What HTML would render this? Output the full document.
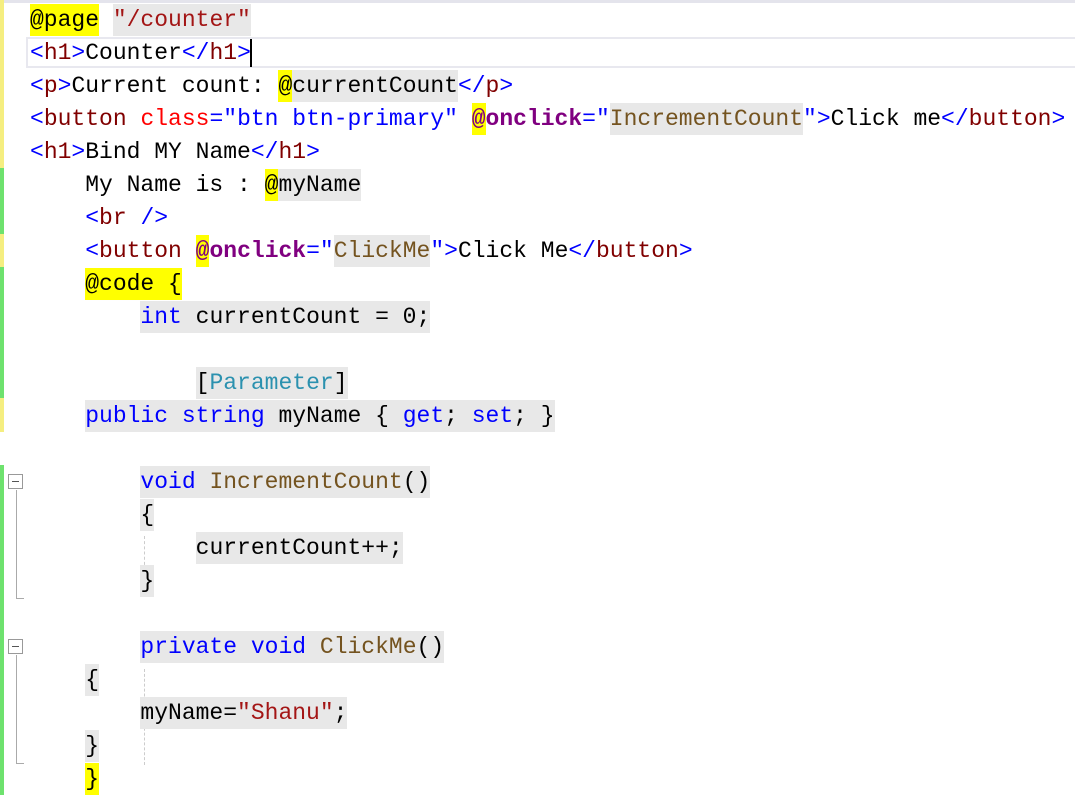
<!DOCTYPE html>
<html><head><style>
body{margin:0;width:1075px;height:795px;background:#fff;overflow:hidden;position:relative;font-family:"Liberation Mono",monospace;}
#w{position:absolute;left:0;top:1px;width:1075px;height:795px}
.l{position:absolute;left:30px;height:33px;line-height:33px;font-size:23px;white-space:pre;color:#000;}
.l span{display:inline-block;height:32px;}
.y{background:#ffff00}.g{background:#e8e8e8}
.t{color:#0000ff}.n{color:#800000}.a{color:#ff0000}.v{color:#0000ff}
.p{color:#800080;font-weight:bold}.m{color:#74531f}.s{color:#a31515}.c{color:#2b91af}.k{color:#0000ff}
.bar{position:absolute;left:0;width:4px}
.fold{position:absolute;left:8px;width:13px;height:13px;border:1px solid #999;background:#fff}
.fold:after{content:"";position:absolute;left:3px;top:6px;width:7px;height:1px;background:#555}
.fl{position:absolute;left:16px;width:7px;border-left:1px solid #aaa;border-bottom:1px solid #aaa}
.dg{position:absolute;left:144px;width:0;border-left:1px dashed #ccc}
</style></head><body>
<div style="position:absolute;left:0;top:0;width:1075px;height:3px;background:#e4e4ec"></div>
<div class="bar" style="top:0;height:168px;background:#f5ee80"></div>
<div class="bar" style="top:168px;height:66px;background:#6ee26e"></div>
<div class="bar" style="top:234px;height:33px;background:#f5ee80"></div>
<div class="bar" style="top:267px;height:131px;background:#6ee26e"></div>
<div class="bar" style="top:398px;height:34px;background:#f5ee80"></div>
<div class="bar" style="top:465px;height:330px;background:#6ee26e"></div>
<div id="w">
<div style="position:absolute;left:26px;top:36px;width:1060px;height:31px;border:2px solid #e8e8ef;box-sizing:border-box"></div>
<div style="position:absolute;left:250px;top:38px;width:2px;height:28px;background:#000"></div>
<div class="fold" style="top:473px"></div><div class="fl" style="top:489px;height:108px"></div>
<div class="fold" style="top:638px"></div><div class="fl" style="top:654px;height:108px"></div>
<div class="dg" style="top:535px;height:60px"></div>
<div class="dg" style="top:668px;height:96px"></div>

<div class="l" style="top:3px"><span class="y">@page</span> <span class="g s">"/counter"</span></div>
<div class="l" style="top:36px"><span class="t">&lt;</span><span class="n">h1</span><span class="t">&gt;</span>Counter<span class="t">&lt;/</span><span class="n">h1</span><span class="t">&gt;</span></div>
<div class="l" style="top:69px"><span class="t">&lt;</span><span class="n">p</span><span class="t">&gt;</span>Current count: <span class="y">@</span><span class="g">currentCount</span><span class="t">&lt;/</span><span class="n">p</span><span class="t">&gt;</span></div>
<div class="l" style="top:102px"><span class="t">&lt;</span><span class="n">button</span> <span class="a">class</span><span class="t">="btn btn-primary"</span> <span class="y p">@</span><span class="p">onclick</span><span class="t">="</span><span class="g m">IncrementCount</span><span class="t">"&gt;</span>Click me<span class="t">&lt;/</span><span class="n">button</span><span class="t">&gt;</span></div>
<div class="l" style="top:135px"><span class="t">&lt;</span><span class="n">h1</span><span class="t">&gt;</span>Bind MY Name<span class="t">&lt;/</span><span class="n">h1</span><span class="t">&gt;</span></div>
<div class="l" style="top:168px">    My Name is : <span class="y">@</span><span class="g">myName</span></div>
<div class="l" style="top:201px">    <span class="t">&lt;</span><span class="n">br</span> <span class="t">/&gt;</span></div>
<div class="l" style="top:234px">    <span class="t">&lt;</span><span class="n">button</span> <span class="y p">@</span><span class="p">onclick</span><span class="t">="</span><span class="g m">ClickMe</span><span class="t">"&gt;</span>Click Me<span class="t">&lt;/</span><span class="n">button</span><span class="t">&gt;</span></div>
<div class="l" style="top:267px">    <span class="y">@code {</span></div>
<div class="l" style="top:300px">        <span class="g"><span class="k">int</span> currentCount = 0;</span></div>
<div class="l" style="top:366px">            <span class="g">[<span class="c">Parameter</span>]</span></div>
<div class="l" style="top:399px">    <span class="g"><span class="k">public</span> <span class="k">string</span> myName { <span class="k">get</span>; <span class="k">set</span>; }</span></div>
<div class="l" style="top:465px">        <span class="g"><span class="k">void</span> <span class="m">IncrementCount</span>()</span></div>
<div class="l" style="top:498px">        <span class="g">{</span></div>
<div class="l" style="top:531px">            <span class="g">currentCount++;</span></div>
<div class="l" style="top:564px">        <span class="g">}</span></div>
<div class="l" style="top:630px">        <span class="g"><span class="k">private</span> <span class="k">void</span> <span class="m">ClickMe</span>()</span></div>
<div class="l" style="top:663px">    <span class="g">{</span></div>
<div class="l" style="top:696px">        <span class="g">myName=<span class="s">"Shanu"</span>;</span></div>
<div class="l" style="top:729px">    <span class="g">}</span></div>
<div class="l" style="top:762px">    <span class="y">}</span></div>
</div>
</body></html>
